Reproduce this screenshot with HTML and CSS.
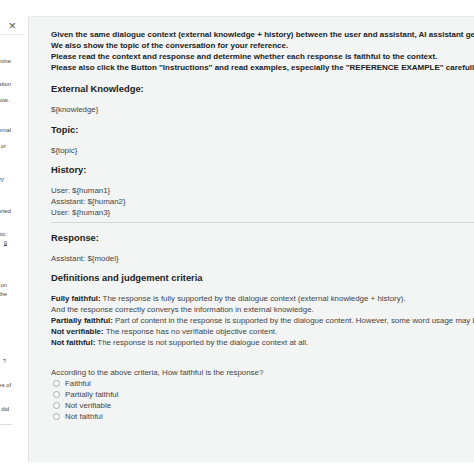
FILE: index.html
```html
<!DOCTYPE html>
<html>
<head>
<meta charset="utf-8">
<link rel="stylesheet" href="styles.css">
</head>
<body>
<div class="app">
  <aside class="sidebar">
    <div class="close-row"><span class="close">×</span></div>
    <div class="side-lines">
      <div class="sl l1">determine</div>
      <div class="sl l2">question</div>
      <div class="sl l3">below.</div>
      <div class="sl l4">external</div>
      <div class="sl l5">or</div>
      <div class="sl l6">history</div>
      <div class="sl l7">supported</div>
      <div class="sl l8">topic:</div>
      <div class="sl l9 u">g</div>
      <div class="sl l10">on</div>
      <div class="sl l11">the</div>
      <div class="sl l12">?</div>
      <div class="sl l13">types of</div>
      <div class="sl l14">did</div>
      <div class="side-rule"></div>
    </div>
  </aside>
  <main class="main">
    <div class="instructions">
      <p>Given the same dialogue context (external knowledge + history) between the user and assistant, AI assistant generates a response.</p>
      <p>We also show the topic of the conversation for your reference.</p>
      <p>Please read the context and response and determine whether each response is faithful to the context.</p>
      <p>Please also click the Button "Instructions" and read examples, especially the "REFERENCE EXAMPLE" carefully.</p>
    </div>
    <h3 class="h">External Knowledge:</h3>
    <p class="t">${knowledge}</p>
    <h3 class="h">Topic:</h3>
    <p class="t">${topic}</p>
    <h3 class="h">History:</h3>
    <div class="t">
      <div>User: ${human1}</div>
      <div>Assistant: ${human2}</div>
      <div>User: ${human3}</div>
    </div>
    <hr class="rule">
    <h3 class="h">Response:</h3>
    <p class="t">Assistant: ${model}</p>
    <h3 class="h">Definitions and judgement criteria</h3>
    <div class="t criteria">
      <div><b>Fully faithful:</b> The response is fully supported by the dialogue context (external knowledge + history).</div>
      <div>And the response correctly converys the information in external knowledge.</div>
      <div><b>Partially faithful:</b> Part of content in the response is supported by the dialogue content. However, some word usage may be wrong.</div>
      <div><b>Not verifiable:</b> The response has no verifiable objective content.</div>
      <div><b>Not faithful:</b> The response is not supported by the dialogue context at all.</div>
    </div>
    <div class="t question">
      <div>According to the above criteria, How faithful is the response?</div>
      <label class="opt"><span class="radio"></span>Faithful</label>
      <label class="opt"><span class="radio"></span>Partially faithful</label>
      <label class="opt"><span class="radio"></span>Not verifiable</label>
      <label class="opt"><span class="radio"></span>Not faithful</label>
    </div>
  </main>
</div>
</body>
</html>
```
FILE: styles.css
```css
html, body {
  margin: 0;
  padding: 0;
  background: #ffffff;
}
body {
  font-family: "Liberation Sans", Arial, sans-serif;
  width: 474px;
  height: 474px;
  overflow: hidden;
}
.app {
  display: flex;
  margin-top: 16px;
  height: 446px;
}
.sidebar {
  width: 28px;
  flex: none;
  border-right: 1px solid #e4e4e4;
  background: #fff;
  overflow: hidden;
}
.close-row {
  height: 18px;
  width: 24px;
  border-bottom: 1px solid #ececec;
  display: flex;
  align-items: center;
  justify-content: flex-end;
}
.close {
  font-size: 13px;
  color: #555;
  line-height: 1;
  margin-right: 8px;
  margin-top: 1px;
}
.side-lines {
  position: relative;
}
.sl {
  position: absolute;
  right: 17px;
  font-size: 5.8px;
  color: #444;
  white-space: nowrap;
  line-height: 7px;
}
.l1 { top: 23px; }
.l2 { top: 46px; }
.l3 { top: 62px; right: 19px; }
.l4 { top: 92px; }
.l5 { top: 108px; right: 22px; }
.l6 { top: 141px; right: 24px; }
.l7 { top: 173px; }
.l8 { top: 196px; right: 21px; }
.l9 { top: 204px; right: 21px; text-decoration: underline; }
.l10 { top: 247px; right: 21px; }
.l11 { top: 256px; right: 21px; }
.l12 { top: 323px; right: 22px; }
.l13 { top: 347px; }
.l14 { top: 371px; right: 19px; }
.side-rule {
  position: absolute;
  top: 389px;
  left: 0;
  width: 12px;
  border-top: 1px solid #dcdcdc;
}
.main {
  flex: 1;
  background: #f3f4f4;
  border-top: 1px solid #ebebeb;
  padding: 12px 0 0 22px;
  overflow: hidden;
  white-space: nowrap;
  height: 433px;
}
p { margin: 0; }
.instructions {
  font-weight: bold;
  font-size: 8px;
  line-height: 11px;
  color: #222;
  margin-bottom: 10px;
}
.h {
  margin: 0 0 9px 0;
  font-size: 9.4px;
  line-height: 12px;
  color: #222;
  font-weight: bold;
}
.t {
  font-size: 7.9px;
  line-height: 11px;
  color: #444;
  margin-bottom: 8.5px;
}
.t b { color: #222; }
.rule {
  border: none;
  border-top: 1px solid #d6d6d6;
  margin: -5px 0 9px 0;
}
.criteria { margin-bottom: 19px; }
.opt {
  display: flex;
  align-items: center;
  height: 11px;
  padding-left: 2px;
}
.radio {
  width: 5px;
  height: 5px;
  border: 1px solid #a8a8a8;
  border-radius: 50%;
  background: #fff;
  margin-right: 5px;
}
```
